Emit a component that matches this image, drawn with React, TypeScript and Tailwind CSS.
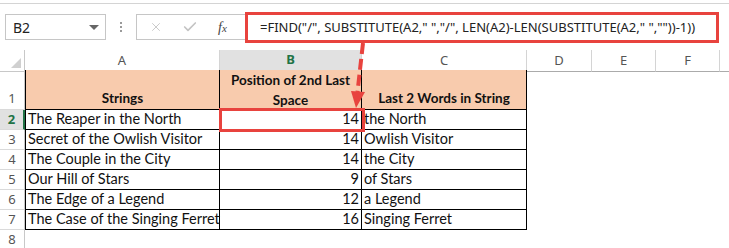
import { X, Check } from 'lucide-react';

const cols = ['A', 'B', 'C', 'D', 'E', 'F'];

const rows = [
  { a: 'The Reaper in the North', b: 14, c: 'the North' },
  { a: 'Secret of the Owlish Visitor', b: 14, c: 'Owlish Visitor' },
  { a: 'The Couple in the City', b: 14, c: 'the City' },
  { a: 'Our Hill of Stars', b: 9, c: 'of Stars' },
  { a: 'The Edge of a Legend', b: 12, c: 'a Legend' },
  { a: 'The Case of the Singing Ferret', b: 16, c: 'Singing Ferret' },
];

const grid = 'grid grid-cols-[25px_195px_142px_165px_65px_64px_64px_1fr]';
const cellFont = "font-['Lato','Liberation_Sans',sans-serif] text-[14.5px] text-[#111] whitespace-nowrap";
const headFont = "font-['Lato','Liberation_Sans',sans-serif] text-[13.5px] font-bold text-[#111] whitespace-nowrap";

function RowHead({ n, active, tall }: { n: number; active?: boolean; tall?: boolean }) {
  return (
    <div
      className={`flex justify-center ${tall ? 'h-[40px] items-end pb-[1px]' : 'h-[20px] items-center'} border-b border-[#dadada] font-['Noto_Sans',sans-serif] text-[13px] ${
        active ? 'bg-[#e1e1e1] text-[#217346] font-bold border-r-2 border-r-[#217346]' : 'text-[#555] border-r border-r-[#c8c8c8]'
      }`}
    >
      {n}
    </div>
  );
}

export default function App() {
  return (
    <div className="relative w-[729px] h-[248px] bg-white overflow-hidden">
      <div className="h-[4px] border-b border-[#d4d4d4]" />

      {/* formula bar */}
      <div className="h-[46px] flex items-start">
        <div className="ml-[5px] mt-[10px] w-[101px] h-[26px] border border-[#c6c6c6] flex items-center justify-between pl-[7px] pr-[6px] font-['Noto_Sans',sans-serif] text-[14px] text-[#222]">
          <span>B2</span>
          <span className="w-0 h-0 border-l-[5px] border-r-[5px] border-t-[5px] border-l-transparent border-r-transparent border-t-[#666]" />
        </div>
        <div className="ml-[14px] mt-[18px] flex flex-col gap-[2px]">
          <span className="w-[2px] h-[2px] bg-[#9a9a9a]" />
          <span className="w-[2px] h-[2px] bg-[#9a9a9a]" />
          <span className="w-[2px] h-[2px] bg-[#9a9a9a]" />
        </div>
        <div className="ml-[14px] mt-[10px] w-[112px] h-[26px] border border-[#c6c6c6] flex items-center">
          <X size={14} strokeWidth={1.5} className="ml-[12px] text-[#c4c4c4]" />
          <Check size={16} strokeWidth={2.5} className="ml-[19px] text-[#c4c4c4]" />
          <span className="ml-[20px] font-['Liberation_Serif',serif] italic text-[14px] text-[#444]">
            f<span className="text-[11px]">x</span>
          </span>
        </div>
        <div className="-ml-[3px] mt-[8px] w-[474px] h-[31px] border-[3px] border-[#e8433e] flex items-center pl-[12px] font-['Noto_Sans',sans-serif] text-[13px] text-[#222] whitespace-nowrap">
          =FIND("/", SUBSTITUTE(A2," ","/", LEN(A2)-LEN(SUBSTITUTE(A2," ",""))-1))
        </div>
      </div>

      {/* column headers */}
      <div className={`${grid} h-[20px]`}>
        <div className="border-r border-b border-[#c8c8c8] relative">
          <span className="absolute right-[3px] bottom-[3px] w-0 h-0 border-b-[10px] border-l-[10px] border-b-[#d0d0d0] border-l-transparent" />
        </div>
        {cols.map(c => (
          <div
            key={c}
            className={`flex items-center justify-center font-['Noto_Sans',sans-serif] text-[13px] border-r border-[#d4d4d4] ${
              c === 'B' ? 'bg-[#e1e1e1] text-[#217346] font-bold border-b-2 border-b-[#217346]' : 'text-[#555] border-b border-b-[#ababab]'
            }`}
          >
            {c}
          </div>
        ))}
        <div className="border-b border-[#ababab]" />
      </div>

      {/* row 1 headers */}
      <div className={grid}>
        <RowHead n={1} tall />
        <div className={`h-[40px] bg-[#f8cbad] border-l border-r border-b border-black flex items-end justify-center pb-[1px] ${headFont}`}>
          Strings
        </div>
        <div className={`h-[40px] bg-[#f8cbad] border-r border-b border-black flex items-center justify-center text-center leading-[20px] ${headFont}`}>
          Position of 2nd Last
          <br />
          Space
        </div>
        <div className={`h-[40px] bg-[#f8cbad] border-r border-b border-black flex items-end justify-center pb-[1px] ${headFont}`}>
          Last 2 Words in String
        </div>
        <div className="col-span-4" />
      </div>

      {rows.map((r, i) => (
        <div key={i} className={grid}>
          <RowHead n={i + 2} active={i === 0} />
          <div className={`h-[20px] border-l border-r border-b border-black pl-[2px] flex items-center leading-none ${cellFont}`}>{r.a}</div>
          <div className={`h-[20px] border-r border-b border-black pr-[2px] flex items-center justify-end leading-none ${cellFont}`}>{r.b}</div>
          <div className={`h-[20px] border-r border-b border-black pl-[2px] flex items-center leading-none ${cellFont}`}>{r.c}</div>
          <div className="col-span-4" />
        </div>
      ))}

      <div className={grid}>
        <RowHead n={8} />
      </div>

      {/* selection highlight on B2 */}
      <div className="absolute left-[219px] top-[108px] w-[146px] h-[24px] border-[3px] border-[#e8433e]" />

      {/* dashed arrow from formula to B2 */}
      <svg className="absolute left-0 top-0" width="729" height="248">
        <line x1="363" y1="43" x2="357.5" y2="92" stroke="#e8433e" strokeWidth="4" strokeDasharray="11 5" />
        <polygon points="351,91 365,92 356,108" fill="#e8433e" />
      </svg>
    </div>
  );
}
